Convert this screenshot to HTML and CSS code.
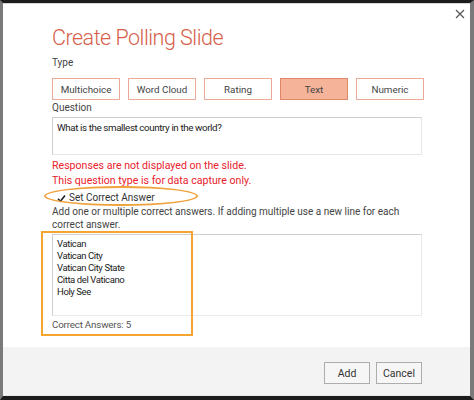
FILE: index.html
```html
<!DOCTYPE html>
<html>
<head>
<meta charset="utf-8">
<link rel="stylesheet" href="styles.css">
</head>
<body>
<div class="frame">
  <div class="dialog">
    <div class="content">
      <svg class="close" width="10" height="10" viewBox="0 0 10 10"><path d="M1 1L9 9M9 1L1 9" stroke="#555" stroke-width="1.2" fill="none"/></svg>
      <h1 class="title">Create Polling Slide</h1>
      <div class="label type-label">Type</div>
      <div class="types">
        <div class="type-btn">Multichoice</div>
        <div class="type-btn">Word Cloud</div>
        <div class="type-btn">Rating</div>
        <div class="type-btn active">Text</div>
        <div class="type-btn">Numeric</div>
      </div>
      <div class="label">Question</div>
      <div class="question-box">What is the smallest country in the world?</div>
      <div class="warning">Responses are not displayed on the slide.<br>This question type is for data capture only.</div>
      <div class="check-row">
        <svg class="check" width="9" height="9" viewBox="0 0 9 9"><path d="M1 4.8L3.4 7.2L8 1.6" stroke="#222" stroke-width="1.6" fill="none"/></svg>
        <span>Set Correct Answer</span>
        <div class="ellipse"></div>
      </div>
      <div class="help">Add one or multiple correct answers. If adding multiple use a new line for each correct answer.</div>
      <div class="answers-wrap">
        <div class="answers-box">Vatican<br>Vatican City<br>Vatican City State<br>Citta del Vaticano<br>Holy See</div>
        <div class="count">Correct Answers: 5</div>
        <div class="highlight"></div>
      </div>
    </div>
    <div class="footer">
      <div class="btn">Add</div>
      <div class="btn">Cancel</div>
    </div>
  </div>
</div>
</body>
</html>
```

FILE: styles.css
```css
html, body {
  margin: 0;
  padding: 0;
  background: #1c1c1c;
}
body {
  width: 474px;
  height: 400px;
  overflow: hidden;
  font-family: Roboto, "Noto Sans", sans-serif;
  font-size: 10px;
  color: #444;
}
.frame {
  height: 400px;
  box-sizing: border-box;
  border-top: 3px solid #1c1c1c;
  border-bottom: 4px solid #1c1c1c;
  border-left: 3px solid #7a7a7a;
  border-right: 4px solid #7a7a7a;
}
.dialog {
  height: 100%;
  display: flex;
  flex-direction: column;
  background: #fff;
  border-top: 1px solid #d8d8d8;
  border-bottom: 1px solid #e8e8e8;
  box-sizing: border-box;
}
.content {
  position: relative;
  padding: 0 44px 0 49px;
  height: 343px;
  box-sizing: border-box;
}
.close {
  position: absolute;
  right: 5px;
  top: 5px;
}
.title {
  margin: 0;
  padding-top: 19px;
  font-weight: 300;
  font-size: 21.5px;
  line-height: 30px;
  letter-spacing: -0.5px;
  color: #d6604a;
}
.label {
  line-height: 14px;
  color: #444;
}
.type-label {
  margin-top: 3px;
}
.types {
  display: flex;
  gap: 8px;
  margin-top: 8px;
  margin-bottom: 1px;
}
.type-btn {
  width: 68px;
  height: 22px;
  box-sizing: border-box;
  border: 1px solid #eeaa98;
  display: flex;
  align-items: center;
  justify-content: center;
  color: #444;
  background: #fff;
  font-size: 9.8px;
}
.type-btn.active {
  background: #f5b39a;
  border-color: #e0876b;
}
.question-box {
  margin-top: 2px;
  width: 370px;
  height: 38px;
  box-sizing: border-box;
  border: 1px solid #cfcfcf;
  border-bottom-color: #e6e6e6;
  border-right-color: #e6e6e6;
  padding: 3px 4px;
  line-height: 13px;
  font-size: 9.8px;
  letter-spacing: -0.4px;
  color: #222;
}
.warning {
  margin-top: 3px;
  font-size: 10.6px;
  line-height: 15px;
  color: #e8212b;
}
.check-row {
  position: relative;
  display: flex;
  align-items: center;
  gap: 3px;
  margin-top: 3px;
  padding-left: 5px;
  height: 14px;
  line-height: 14px;
  color: #333;
}
.check {
  display: block;
}
.ellipse {
  position: absolute;
  left: -8px;
  top: -5px;
  width: 150px;
  height: 16px;
  border: 2px solid #f0a23c;
  border-radius: 50%;
}
.help {
  line-height: 13px;
  width: 370px;
  color: #444;
}
.answers-wrap {
  position: relative;
  margin-top: 3px;
}
.answers-box {
  width: 370px;
  height: 82px;
  box-sizing: border-box;
  border: 1px solid #cfcfcf;
  border-bottom-color: #eaeaea;
  border-right-color: #eaeaea;
  padding: 3px 4px;
  line-height: 12px;
  font-size: 9.5px;
  letter-spacing: -0.4px;
  color: #222;
}
.count {
  line-height: 15px;
  margin-top: 1px;
  font-size: 9.8px;
  letter-spacing: -0.2px;
  color: #555;
}
.highlight {
  position: absolute;
  left: -11px;
  top: -3px;
  width: 152px;
  height: 105px;
  box-sizing: border-box;
  border: 2px solid #f5a430;
}
.footer {
  flex: 1;
  background: #f3f3f3;
  display: flex;
  justify-content: flex-end;
  align-items: flex-start;
  gap: 6px;
  padding: 15px 48px 0 0;
}
.btn {
  width: 46px;
  height: 22px;
  box-sizing: border-box;
  border: 1px solid #adadad;
  background: #f6f6f6;
  display: flex;
  align-items: center;
  justify-content: center;
  color: #333;
  font-size: 10.5px;
}
```
